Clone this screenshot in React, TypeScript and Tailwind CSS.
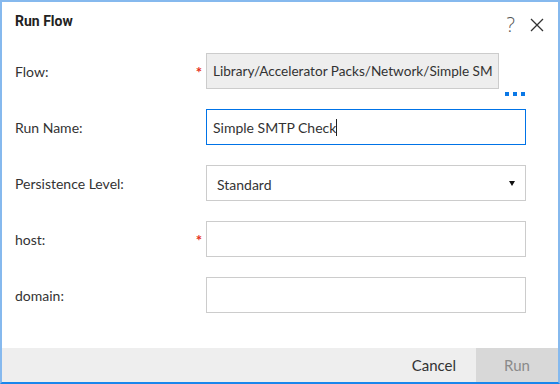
const font = { fontFamily: "Lato, 'Open Sans', sans-serif" };

function Field({
  label,
  required,
  children,
}: {
  label: string;
  required?: boolean;
  children: React.ReactNode;
}) {
  return (
    <div className="flex items-start h-[36px]">
      <div className="w-[178px] pt-[8px] text-[14px] text-[#333]">{label}</div>
      <div className="w-[13px] pt-[12px] pr-[4px] text-right text-[15px] leading-none text-[#e5301a] font-bold">
        {required ? "*" : ""}
      </div>
      <div className="flex items-start">{children}</div>
    </div>
  );
}

export default function App() {
  return (
    <div
      className="w-[560px] h-[384px] bg-white flex flex-col border-t-[2px] border-l-[2px] border-r-[2px] border-b-[2px] border-t-[#86b9ee] border-l-[#86b9ee] border-r-[#86b9ee] border-b-[#1a86ec]"
      style={font}
    >
      <div className="flex items-start justify-between h-[50px] pl-[13px] pr-[14px] pt-[9px]">
        <span
          className="text-[14px] font-bold text-[#222]"
          style={{ fontFamily: "Roboto, sans-serif" }}
        >
          Run Flow
        </span>
        <div className="flex items-center gap-[15px] pt-[4px] text-[#555]">
          <span className="text-[20px] leading-none font-light" style={{ fontFamily: "'Open Sans', sans-serif" }}>?</span>
          <svg width="14" height="14" viewBox="0 0 14 14">
            <path d="M1 1L13 13M13 1L1 13" stroke="#333" strokeWidth="1.3" />
          </svg>
        </div>
      </div>

      <div className="flex flex-col gap-[20px] pl-[13px] pt-[1px] flex-1">
        <Field label="Flow:" required>
          <div className="w-[293px] h-[36px] bg-[#eeeeee] border border-[#cccccc] flex items-center pl-[6px] text-[13.6px] text-[#333] whitespace-nowrap overflow-hidden">
            Library/Accelerator Packs/Network/Simple SM
          </div>
          <div className="flex gap-[4px] ml-[6px] mt-[39px]">
            <span className="w-[4px] h-[4px] bg-[#0a78e6]" />
            <span className="w-[4px] h-[4px] bg-[#0a78e6]" />
            <span className="w-[4px] h-[4px] bg-[#0a78e6]" />
          </div>
        </Field>
        <Field label="Run Name:">
          <div className="w-[320px] h-[36px] border border-[#0073e7] flex items-center pl-[6px] text-[14px] text-[#333]">
            Simple SMTP Check
            <span className="w-px h-[17px] bg-[#222]" />
          </div>
        </Field>
        <Field label="Persistence Level:">
          <div className="w-[320px] h-[36px] border border-[#cccccc] flex items-center justify-between pl-[10px] pr-[10px] text-[14px] text-[#333]">
            <span className="pt-[2px]">Standard</span>
            <svg width="6" height="5" viewBox="0 0 6 5">
              <path d="M0 0H6L3 5Z" fill="#111" />
            </svg>
          </div>
        </Field>
        <Field label="host:" required>
          <div className="w-[320px] h-[36px] border border-[#cccccc]" />
        </Field>
        <Field label="domain:">
          <div className="w-[320px] h-[36px] border border-[#cccccc]" />
        </Field>
      </div>

      <div className="h-[34px] bg-[#eeeeee] flex items-stretch justify-end text-[15px]">
        <div className="flex items-center pr-[20px] text-[#333]">Cancel</div>
        <div className="w-[82px] bg-[#d8d8d8] flex items-center justify-center text-[#8a8a8a]">
          Run
        </div>
      </div>
    </div>
  );
}
